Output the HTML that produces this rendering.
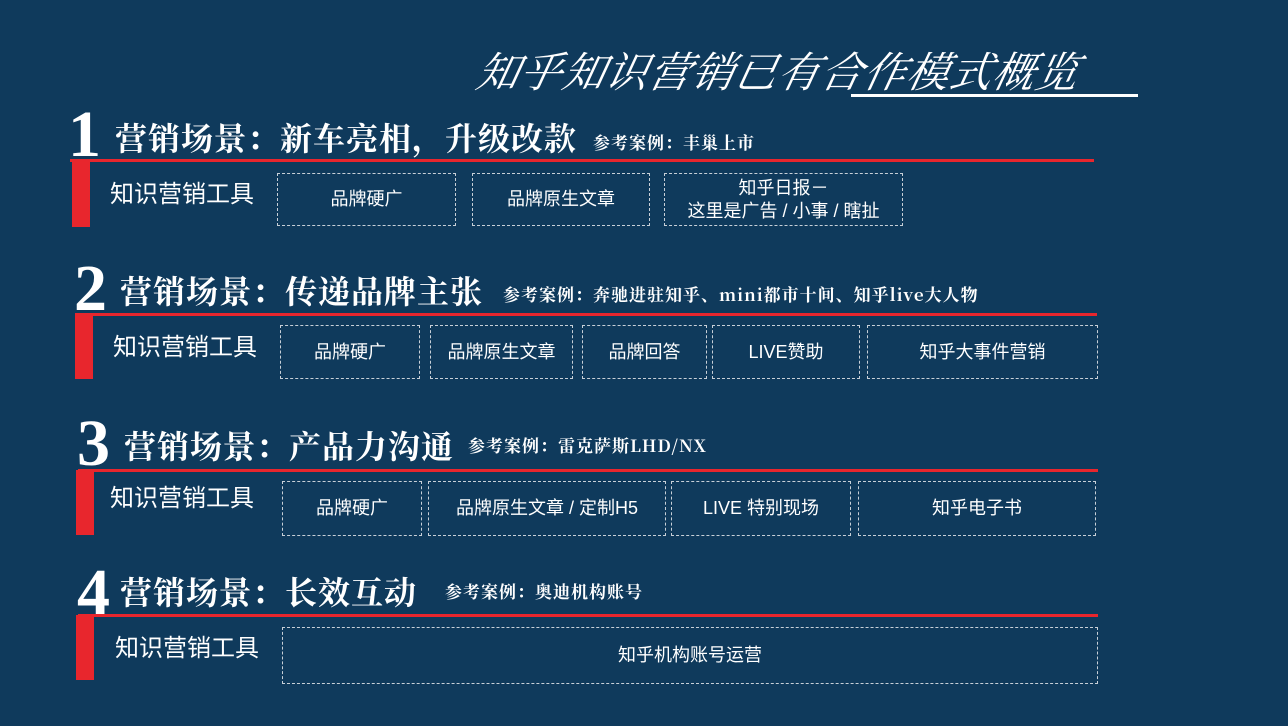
<!DOCTYPE html>
<html><head><meta charset="utf-8"><style>
*{margin:0;padding:0;box-sizing:border-box}
body{width:1288px;height:726px;background:#0f3a5c;position:relative;overflow:hidden;color:#fff;font-family:"Liberation Sans","Noto Sans CJK SC",sans-serif}
.a{position:absolute;white-space:nowrap}
.t{font-family:"Liberation Serif","Noto Serif CJK SC",serif;font-style:italic;font-size:42px;transform:skewX(-12deg);letter-spacing:1px}
.n{font-family:"Liberation Serif","Noto Serif CJK SC",serif;font-weight:bold;font-size:66px;line-height:1}
.h{font-family:"Noto Serif CJK SC",serif;font-weight:bold;font-size:32px;line-height:1;letter-spacing:1px}
.r{font-family:"Noto Serif CJK SC",serif;font-weight:bold;font-size:17px;line-height:1;letter-spacing:1px}
.rl{position:absolute;height:3px;background:#e8262d}
.bar{position:absolute;width:18px;background:#e8262d}
.lb{position:absolute;font-size:24px;line-height:1;font-family:"Noto Sans CJK SC",sans-serif}
.b{position:absolute;border:1.5px dashed #c8d0d8;display:flex;align-items:center;justify-content:center;text-align:center;font-size:18px;line-height:1.25;font-family:"Liberation Sans","Noto Sans CJK SC",sans-serif}
</style></head><body>
<div class="a t" style="left:478px;top:40px">知乎知识营销已有合作模式概览</div>
<div class="a" style="left:851px;top:94px;width:287px;height:3px;background:#fff"></div>

<div class="a n" style="left:68px;top:102px">1</div>
<div class="a h" style="left:115px;top:121px">营销场景：新车亮相，升级改款</div>
<div class="a r" style="left:593px;top:133px">参考案例：丰巢上市</div>
<div class="rl" style="left:70px;top:159px;width:1024px"></div>
<div class="bar" style="left:72px;top:160px;height:67px"></div>
<div class="lb" style="left:110px;top:180px">知识营销工具</div>
<div class="b" style="left:277px;top:173px;width:179px;height:53px">品牌硬广</div>
<div class="b" style="left:472px;top:173px;width:178px;height:53px">品牌原生文章</div>
<div class="b" style="left:664px;top:173px;width:239px;height:53px">知乎日报－<br>这里是广告 / 小事 / 瞎扯</div>

<div class="a n" style="left:74px;top:256px">2</div>
<div class="a h" style="left:120px;top:274px">营销场景：传递品牌主张</div>
<div class="a r" style="left:503px;top:285px">参考案例：奔驰进驻知乎、mini都市十间、知乎live大人物</div>
<div class="rl" style="left:75px;top:313px;width:1022px"></div>
<div class="bar" style="left:75px;top:314px;height:65px"></div>
<div class="lb" style="left:113px;top:333px">知识营销工具</div>
<div class="b" style="left:280px;top:325px;width:140px;height:54px">品牌硬广</div>
<div class="b" style="left:430px;top:325px;width:143px;height:54px">品牌原生文章</div>
<div class="b" style="left:582px;top:325px;width:125px;height:54px">品牌回答</div>
<div class="b" style="left:712px;top:325px;width:148px;height:54px">LIVE赞助</div>
<div class="b" style="left:867px;top:325px;width:231px;height:54px">知乎大事件营销</div>

<div class="a n" style="left:77px;top:411px">3</div>
<div class="a h" style="left:124px;top:429px">营销场景：产品力沟通</div>
<div class="a r" style="left:468px;top:436px">参考案例：雷克萨斯LHD/NX</div>
<div class="rl" style="left:78px;top:469px;width:1020px"></div>
<div class="bar" style="left:76px;top:470px;height:65px"></div>
<div class="lb" style="left:110px;top:484px">知识营销工具</div>
<div class="b" style="left:282px;top:481px;width:140px;height:55px">品牌硬广</div>
<div class="b" style="left:428px;top:481px;width:238px;height:55px">品牌原生文章 / 定制H5</div>
<div class="b" style="left:671px;top:481px;width:180px;height:55px">LIVE 特别现场</div>
<div class="b" style="left:858px;top:481px;width:238px;height:55px">知乎电子书</div>

<div class="a n" style="left:77px;top:560px">4</div>
<div class="a h" style="left:120px;top:575px">营销场景：长效互动</div>
<div class="a r" style="left:445px;top:582px">参考案例：奥迪机构账号</div>
<div class="rl" style="left:78px;top:614px;width:1020px"></div>
<div class="bar" style="left:76px;top:615px;height:65px"></div>
<div class="lb" style="left:115px;top:634px">知识营销工具</div>
<div class="b" style="left:282px;top:627px;width:816px;height:57px">知乎机构账号运营</div>
</body></html>
